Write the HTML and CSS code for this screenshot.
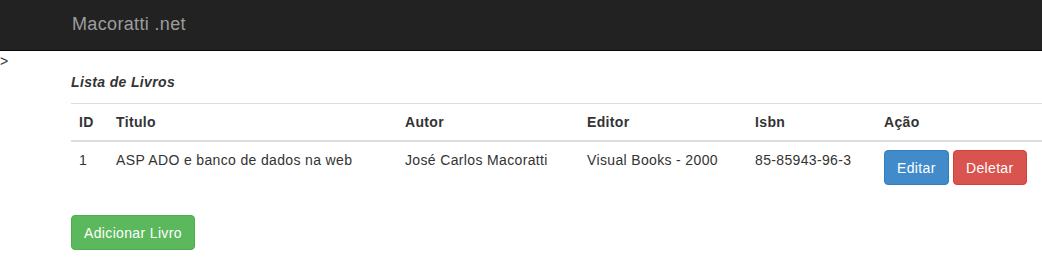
FILE: index.html
```html
<!DOCTYPE html>
<html lang="pt">
<head>
    <meta charset="UTF-8">
    <title>Lista de Livros</title>
    <link rel="stylesheet" href="styles.css">
</head>
<body>
    <div class="navbar">
        <div class="navbar-inner">
            <a class="navbar-brand" href="#">Macoratti .net</a>
        </div>
    </div>
    <div class="stray">&gt;</div>
    <div class="body-content">
        <h4 class="titulo">Lista de Livros</h4>
        <table class="table">
            <colgroup>
                <col class="col-id">
                <col class="col-titulo">
                <col class="col-autor">
                <col class="col-editor">
                <col class="col-isbn">
                <col>
            </colgroup>
            <thead>
                <tr>
                    <th>ID</th>
                    <th>Titulo</th>
                    <th>Autor</th>
                    <th>Editor</th>
                    <th>Isbn</th>
                    <th>Ação</th>
                </tr>
            </thead>
            <tbody>
                <tr>
                    <td>1</td>
                    <td>ASP ADO e banco de dados na web</td>
                    <td>José Carlos Macoratti</td>
                    <td>Visual Books - 2000</td>
                    <td>85-85943-96-3</td>
                    <td>
                        <a class="btn btn-primary" href="#">Editar</a>
                        <a class="btn btn-danger" href="#">Deletar</a>
                    </td>
                </tr>
            </tbody>
        </table>
        <a class="btn btn-success" href="#">Adicionar Livro</a>
    </div>
</body>
</html>
```

FILE: styles.css
```css
body {
    margin: 0;
    font-family: "Liberation Sans", Arial, sans-serif;
    font-size: 14px;
    line-height: 20px;
    letter-spacing: 0.35px;
    color: #333;
    background: #fff;
}
.navbar {
    height: 50px;
    background-color: #222;
    border-bottom: 1px solid #080808;
}
.navbar-inner {
    padding-left: 72px;
}
.navbar-brand {
    display: block;
    font-size: 18px;
    line-height: 20px;
    padding: 14px 0 16px;
    color: #9d9d9d;
    text-decoration: none;
}
.stray {
    height: 20px;
}
.body-content {
    padding-left: 71px;
}
.titulo {
    margin: 1px 0 11px;
    font-size: 14px;
    font-style: italic;
    font-weight: bold;
    line-height: 20px;
}
.table {
    width: 100%;
    border-collapse: collapse;
    border-spacing: 0;
    margin-bottom: 22px;
}
.col-id { width: 37px; }
.col-titulo { width: 289px; }
.col-autor { width: 182px; }
.col-editor { width: 168px; }
.col-isbn { width: 129px; }
.table th,
.table td {
    padding: 8px;
    text-align: left;
    vertical-align: top;
    line-height: 20px;
}
.table th {
    border-top: 1px solid #ddd;
    border-bottom: 2px solid #ddd;
    font-weight: bold;
}
.btn {
    display: inline-block;
    padding: 7px 12px 6px;
    font-size: 14px;
    line-height: 20px;
    border: 1px solid transparent;
    border-radius: 4px;
    color: #fff;
    text-decoration: none;
}
.btn-primary {
    background-color: #428bca;
    border-color: #357ebd;
}
.btn-danger {
    background-color: #d9534f;
    border-color: #d43f3a;
}
.btn-success {
    background-color: #5cb85c;
    border-color: #4cae4c;
}
```
